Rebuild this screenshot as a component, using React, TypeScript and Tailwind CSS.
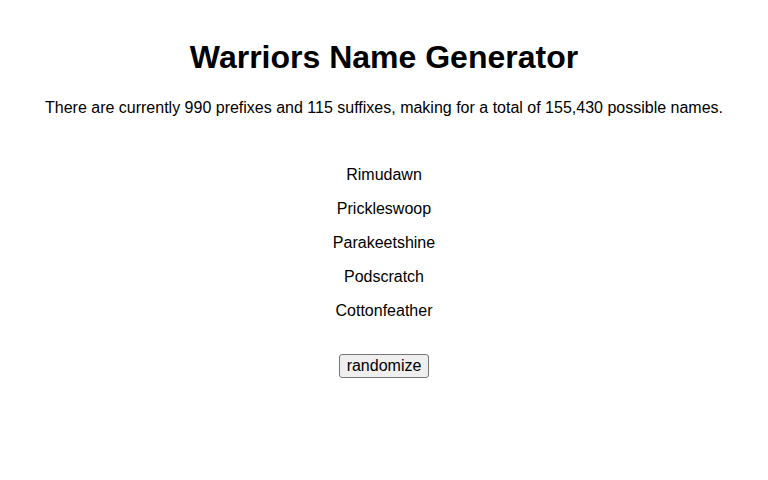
import React from "react";

const names = ["Rimudawn", "Prickleswoop", "Parakeetshine", "Podscratch", "Cottonfeather"];

export default function App() {
  return (
    <div
      className="min-h-[480px] w-full bg-white text-black text-center"
      style={{ fontFamily: '"Liberation Sans", Arial, sans-serif' }}
    >
      <div className="pt-[39px] flex flex-col items-center">
        <h1 className="text-[32px] leading-[37px] font-bold">Warriors Name Generator</h1>
        <p className="mt-[23px] text-[16px] leading-[18px]">
          There are currently 990 prefixes and 115 suffixes, making for a total of 155,430 possible names.
        </p>
        <div className="mt-[49px] flex flex-col items-center gap-4 text-[16px] leading-[18px]">
          {names.map((n) => (
            <div key={n}>{n}</div>
          ))}
        </div>
        <button className="mt-[34px] h-[24px] px-[7px] text-[16px] leading-[18px] bg-[#efefef] border border-[#767676] rounded-[3px] text-black">
          randomize
        </button>
      </div>
    </div>
  );
}
